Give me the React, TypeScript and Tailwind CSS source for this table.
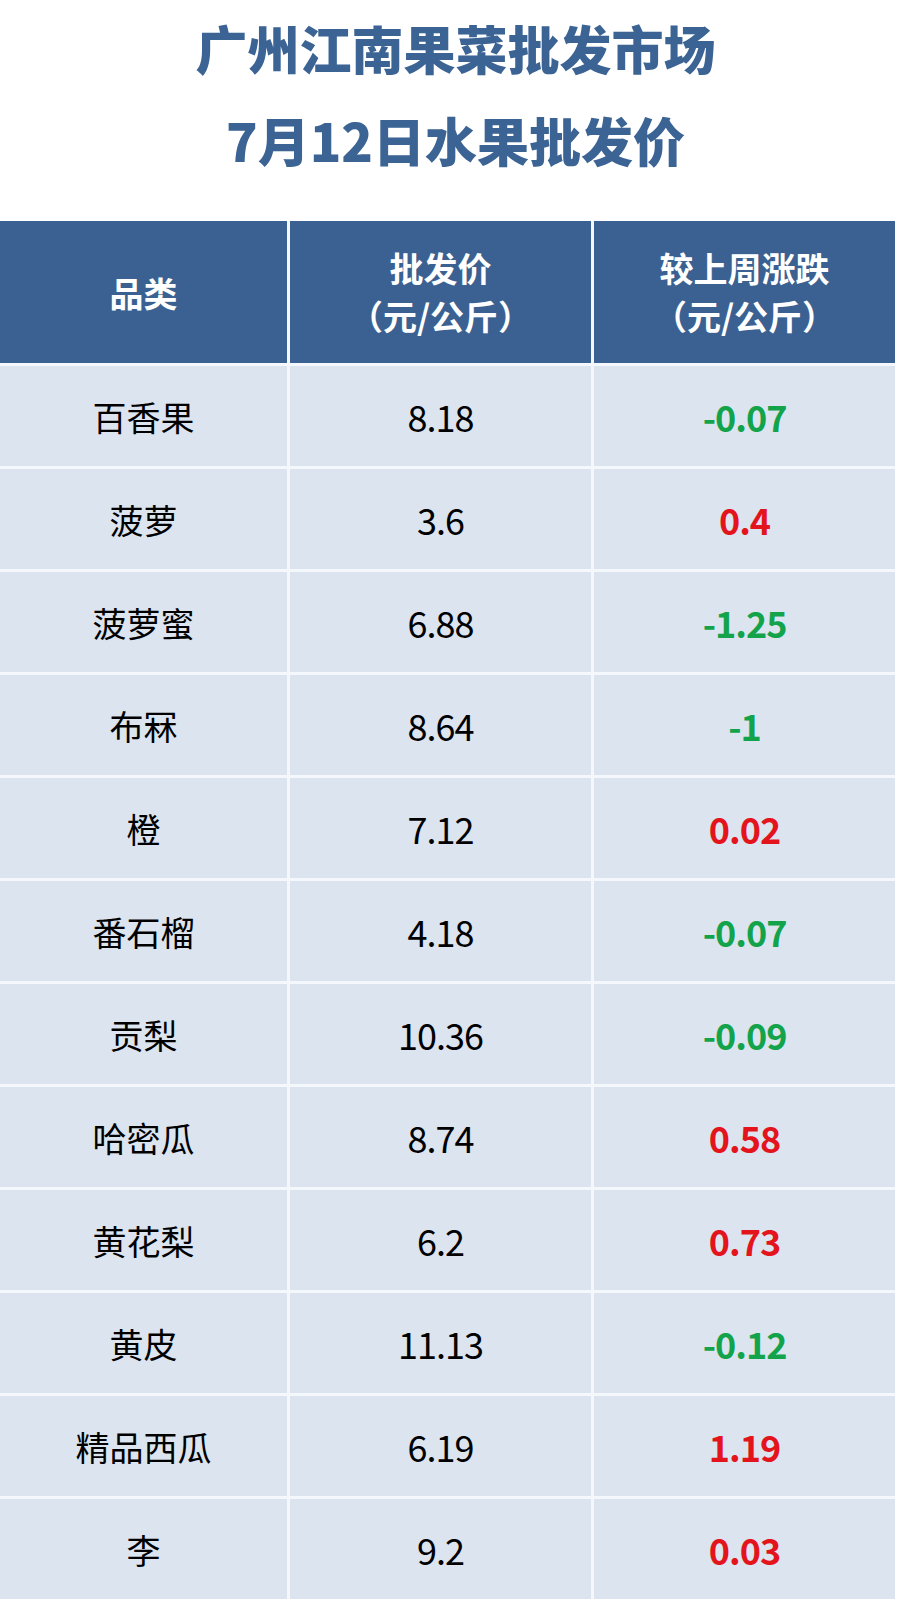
const rows: { name: string; price: string; change: string }[] = [
  { name: "百香果", price: "8.18", change: "-0.07" },
  { name: "菠萝", price: "3.6", change: "0.4" },
  { name: "菠萝蜜", price: "6.88", change: "-1.25" },
  { name: "布冧", price: "8.64", change: "-1" },
  { name: "橙", price: "7.12", change: "0.02" },
  { name: "番石榴", price: "4.18", change: "-0.07" },
  { name: "贡梨", price: "10.36", change: "-0.09" },
  { name: "哈密瓜", price: "8.74", change: "0.58" },
  { name: "黄花梨", price: "6.2", change: "0.73" },
  { name: "黄皮", price: "11.13", change: "-0.12" },
  { name: "精品西瓜", price: "6.19", change: "1.19" },
  { name: "李", price: "9.2", change: "0.03" },
];

const font = { fontFamily: '"Noto Sans CJK SC", "Noto Sans", sans-serif' };

export default function App() {
  return (
    <div className="w-[911px] h-[1600px] overflow-hidden bg-white" style={font}>
      {/* Title */}
      <div className="pt-[2px] pb-[35px] text-center text-[52px] leading-[92px] font-black text-[#3b6394]">
        <div>广州江南果菜批发市场</div>
        <div>7月12日水果批发价</div>
      </div>

      {/* Table */}
      <div className="w-[895px] grid grid-cols-[287px_301px_301px] gap-[3px] bg-[#f4f7fb]">
        <div className="h-[142px] bg-[#3a6191] flex items-center justify-center text-white font-bold text-[34px]">
          品类
        </div>
        <div className="h-[142px] bg-[#3a6191] flex flex-col items-center justify-center text-white font-bold text-[34px] leading-[48px]">
          <div>批发价</div>
          <div>（元/公斤）</div>
        </div>
        <div className="h-[142px] bg-[#3a6191] flex flex-col items-center justify-center text-white font-bold text-[34px] leading-[48px]">
          <div>较上周涨跌</div>
          <div>（元/公斤）</div>
        </div>

        {rows.map((r) => {
          const down = r.change.startsWith("-");
          return (
            <div key={r.name} className="contents">
              <div className="h-[100px] bg-[#dce4f0] flex items-center justify-center text-[34px] text-black">
                {r.name}
              </div>
              <div className="h-[100px] bg-[#dce4f0] flex items-center justify-center text-[36px] tracking-[-1px] text-black">
                {r.price}
              </div>
              <div
                className={
                  down
                    ? "h-[100px] bg-[#dce4f0] flex items-center justify-center text-[36px] tracking-[-1px] font-bold text-[#12a34b]"
                    : "h-[100px] bg-[#dce4f0] flex items-center justify-center text-[36px] tracking-[-1px] font-bold text-[#e3141c]"
                }
              >
                {r.change}
              </div>
            </div>
          );
        })}
      </div>
    </div>
  );
}
